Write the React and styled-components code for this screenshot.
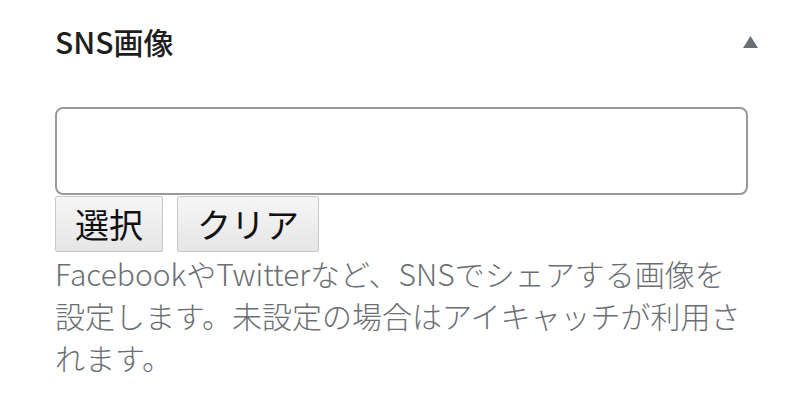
import styled, { createGlobalStyle } from "styled-components"

const Global = createGlobalStyle`
    html, body {
        margin: 0;
        padding: 0;
        background: #ffffff;
    }
    body {
        font-family: "Noto Sans CJK JP", "Noto Sans", sans-serif;
    }
`

export default function App() {
    return (
        <>
            <Global />
            <Panel>
                <Header>
                    <Title>SNS画像</Title>
                    <Toggle aria-label="閉じる">
                        <svg width="15" height="12" viewBox="0 0 15 12">
                            <path d="M7.5 0 L15 12 L0 12 Z" fill="#6b6e73" />
                        </svg>
                    </Toggle>
                </Header>
                <Body>
                    <UrlBox />
                    <Buttons>
                        <Button>選択</Button>
                        <Button>クリア</Button>
                    </Buttons>
                    <Help>
                        FacebookやTwitterなど、SNSでシェアする画像を設定します。未設定の場合はアイキャッチが利用されます。
                    </Help>
                </Body>
            </Panel>
        </>
    )
}

const Panel = styled.div`
    width: 800px;
    height: 402px;
    box-sizing: border-box;
    padding: 21px 42px 0 55px;
    background: #ffffff;
`

const Header = styled.div`
    display: flex;
    align-items: center;
    justify-content: space-between;
    height: 40px;
`

const Title = styled.h2`
    margin: 0;
    font-size: 30px;
    font-weight: 500;
    color: #1e1e1e;
    line-height: 40px;
`

const Toggle = styled.button`
    border: none;
    background: none;
    padding: 0;
    display: flex;
    margin-top: 2px;
`

const Body = styled.div`
    margin-top: 46px;
    width: 693px;
`

const UrlBox = styled.textarea`
    display: block;
    width: 693px;
    height: 88px;
    box-sizing: border-box;
    margin: 0;
    border: 2px solid #96999e;
    border-radius: 8px;
    resize: none;
    background: #ffffff;
`

const Buttons = styled.div`
    display: flex;
    gap: 14px;
    margin-top: 1px;
`

const Button = styled.button`
    box-sizing: border-box;
    height: 56px;
    padding: 0 19px;
    margin: 0;
    border: 1px solid #c7c7c7;
    border-radius: 2px;
    background: linear-gradient(#f6f6f6, #e6e6e6);
    font-family: "Noto Sans CJK JP", sans-serif;
    font-size: 34px;
    font-weight: 400;
    color: #111111;
    line-height: 1;
`

const Help = styled.p`
    margin: 0;
    font-size: 30px;
    font-weight: 300;
    line-height: 42px;
    color: #6b6e73;
`
